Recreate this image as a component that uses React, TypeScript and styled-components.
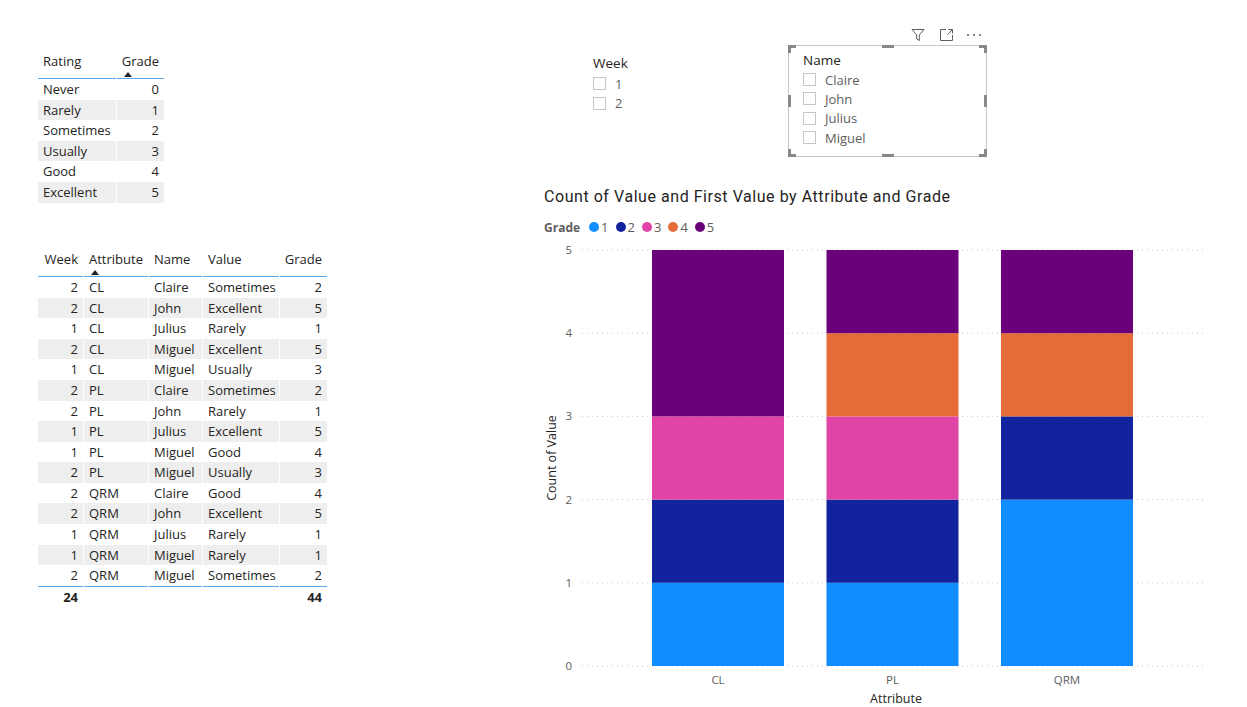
import React from 'react'
import styled, { createGlobalStyle } from 'styled-components'

const GlobalStyle = createGlobalStyle`
  html, body {
    margin: 0;
    padding: 0;
    background: #ffffff;
  }
  body {
    font-family: "Open Sans", "Noto Sans", sans-serif;
    color: #252423;
  }
`

const ratings = [
  ['Never', 0],
  ['Rarely', 1],
  ['Sometimes', 2],
  ['Usually', 3],
  ['Good', 4],
  ['Excellent', 5],
] as const

const rows: [number, string, string, string, number][] = [
  [2, 'CL', 'Claire', 'Sometimes', 2],
  [2, 'CL', 'John', 'Excellent', 5],
  [1, 'CL', 'Julius', 'Rarely', 1],
  [2, 'CL', 'Miguel', 'Excellent', 5],
  [1, 'CL', 'Miguel', 'Usually', 3],
  [2, 'PL', 'Claire', 'Sometimes', 2],
  [2, 'PL', 'John', 'Rarely', 1],
  [1, 'PL', 'Julius', 'Excellent', 5],
  [1, 'PL', 'Miguel', 'Good', 4],
  [2, 'PL', 'Miguel', 'Usually', 3],
  [2, 'QRM', 'Claire', 'Good', 4],
  [2, 'QRM', 'John', 'Excellent', 5],
  [1, 'QRM', 'Julius', 'Rarely', 1],
  [1, 'QRM', 'Miguel', 'Rarely', 1],
  [2, 'QRM', 'Miguel', 'Sometimes', 2],
]

const gradeColors: Record<number, string> = {
  1: '#118DFF',
  2: '#12239E',
  3: '#E044A7',
  4: '#E66C37',
  5: '#6B007B',
}

// stacks per category: [grade, count]
const stacks: { label: string; segs: [number, number][] }[] = [
  { label: 'CL', segs: [[1, 1], [2, 1], [3, 1], [5, 2]] },
  { label: 'PL', segs: [[1, 1], [2, 1], [3, 1], [4, 1], [5, 1]] },
  { label: 'QRM', segs: [[1, 2], [2, 1], [4, 1], [5, 1]] },
]

const App: React.FC = () => {
  return (
    <>
      <GlobalStyle />
      <Page>
        <LeftColumn>
          <Grid $cols="78px 47px">
            <HeadCell>
              <HeadLabel>Rating</HeadLabel>
            </HeadCell>
            <HeadCell $right>
              <HeadLabel>
                Grade
                <SortArrow />
              </HeadLabel>
            </HeadCell>
            {ratings.map(([name, grade], i) => (
              <React.Fragment key={name}>
                <Cell $shade={i % 2 === 1}>{name}</Cell>
                <Cell $shade={i % 2 === 1} $right>
                  {grade}
                </Cell>
              </React.Fragment>
            ))}
          </Grid>

          <MainTable $cols="45px 64px 53px 76px 47px">
            <HeadCell $right>
              <HeadLabel>Week</HeadLabel>
            </HeadCell>
            <HeadCell>
              <HeadLabel>
                Attribute
                <SortArrow />
              </HeadLabel>
            </HeadCell>
            <HeadCell>
              <HeadLabel>Name</HeadLabel>
            </HeadCell>
            <HeadCell>
              <HeadLabel>Value</HeadLabel>
            </HeadCell>
            <HeadCell $right>
              <HeadLabel>Grade</HeadLabel>
            </HeadCell>
            {rows.map((r, i) => (
              <React.Fragment key={i}>
                <Cell $shade={i % 2 === 1} $right>
                  {r[0]}
                </Cell>
                <Cell $shade={i % 2 === 1}>{r[1]}</Cell>
                <Cell $shade={i % 2 === 1}>{r[2]}</Cell>
                <Cell $shade={i % 2 === 1}>{r[3]}</Cell>
                <Cell $shade={i % 2 === 1} $right>
                  {r[4]}
                </Cell>
              </React.Fragment>
            ))}
            <TotalCell $right>24</TotalCell>
            <TotalCell />
            <TotalCell />
            <TotalCell />
            <TotalCell $right>44</TotalCell>
          </MainTable>
        </LeftColumn>

        <RightColumn>
          <SlicerRow>
            <WeekSlicer>
              <SlicerTitle>Week</SlicerTitle>
              <OptionList $offset={2}>
                {['1', '2'].map((w) => (
                  <Option key={w}>
                    <CheckBox />
                    {w}
                  </Option>
                ))}
              </OptionList>
            </WeekSlicer>

            <NameVisual>
              <IconBar>
                <IconButton>
                  <svg width="14" height="14" viewBox="0 0 14 14" fill="none">
                    <path d="M1 1.5 H13 L8.3 7 V12.5 L5.7 11 V7 Z" stroke="#605E5C" strokeWidth="1" strokeLinejoin="round" />
                  </svg>
                </IconButton>
                <IconButton>
                  <svg width="15" height="14" viewBox="0 0 15 14" fill="none">
                    <path d="M7 1.5 H1.5 V12.5 H13.5 V7" stroke="#605E5C" strokeWidth="1" />
                    <path d="M9.5 1.5 H13.5 V5.5 M13.5 1.5 L8.5 6.5" stroke="#605E5C" strokeWidth="1" />
                  </svg>
                </IconButton>
                <IconButton>
                  <svg width="16" height="4" viewBox="0 0 16 4" fill="#605E5C">
                    <circle cx="2" cy="2" r="1" />
                    <circle cx="8" cy="2" r="1" />
                    <circle cx="14" cy="2" r="1" />
                  </svg>
                </IconButton>
              </IconBar>
              <Frame>
                <Handle $pos="tl" />
                <Handle $pos="tr" />
                <Handle $pos="bl" />
                <Handle $pos="br" />
                <Handle $pos="t" />
                <Handle $pos="b" />
                <Handle $pos="l" />
                <Handle $pos="r" />
                <SlicerTitle>Name</SlicerTitle>
                <OptionList $offset={1}>
                  {['Claire', 'John', 'Julius', 'Miguel'].map((n) => (
                    <Option key={n} $tight>
                      <CheckBox />
                      {n}
                    </Option>
                  ))}
                </OptionList>
              </Frame>
            </NameVisual>
          </SlicerRow>

          <Chart>
            <ChartHeader>
              <ChartTitle>Count of Value and First Value by Attribute and Grade</ChartTitle>
              <Legend>
                <LegendTitle>Grade</LegendTitle>
                {[1, 2, 3, 4, 5].map((g) => (
                  <LegendItem key={g}>
                    <Dot $color={gradeColors[g]} />
                    {g}
                  </LegendItem>
                ))}
              </Legend>
            </ChartHeader>
            <ChartSvg width="712" height="467" viewBox="0 0 712 467">
              {[0, 1, 2, 3, 4, 5].map((v) => {
                const y = 426 - 83.2 * v
                return (
                  <g key={v}>
                    <line x1="47" x2="671" y1={y} y2={y} stroke="#c8c6c4" strokeWidth="1" strokeDasharray="1 4" />
                    <AxisText x="37" y={y + 4} textAnchor="end">
                      {v}
                    </AxisText>
                  </g>
                )
              })}
              {stacks.map((s, i) => {
                const x = 117 + i * 174.5
                let base = 0
                return (
                  <g key={s.label}>
                    {s.segs.map(([g, n]) => {
                      const top = 426 - 83.2 * (base + n)
                      const h = 83.2 * n
                      base += n
                      return <rect key={g} x={x} y={top} width="132" height={h} fill={gradeColors[g]} />
                    })}
                    <AxisText x={x + 66} y="444" textAnchor="middle">
                      {s.label}
                    </AxisText>
                  </g>
                )
              })}
              <AxisTitle x="16" y="218" textAnchor="middle" dominantBaseline="central" transform="rotate(-90 16 218)">
                Count of Value
              </AxisTitle>
              <AxisTitle x="361" y="463" textAnchor="middle">
                Attribute
              </AxisTitle>
            </ChartSvg>
          </Chart>
        </RightColumn>
      </Page>
    </>
  )
}

const Page = styled.div`
  display: flex;
  width: 1247px;
  height: 707px;
  overflow: hidden;
`

const LeftColumn = styled.div`
  width: 535px;
  box-sizing: border-box;
  padding: 51px 0 0 38px;
  display: flex;
  flex-direction: column;
  align-items: flex-start;
`

const Grid = styled.div<{ $cols: string }>`
  display: grid;
  grid-template-columns: ${(p) => p.$cols};
  column-gap: 1px;
  font-size: 13px;
  color: #252423;
`

const MainTable = styled(Grid)`
  margin-top: 46.4px;
`

const HeadCell = styled.div<{ $right?: boolean }>`
  height: 28px;
  box-sizing: border-box;
  padding: 1px 5px 0;
  line-height: 18px;
  border-bottom: 1px solid #5aa7ec;
  display: flex;
  justify-content: ${(p) => (p.$right ? 'flex-end' : 'flex-start')};
  white-space: nowrap;
`

const HeadLabel = styled.span`
  display: inline-flex;
  flex-direction: column;
  align-items: flex-start;
`

const SortArrow = styled.span`
  width: 0;
  height: 0;
  margin: 2px 0 0 2px;
  border-left: 4px solid transparent;
  border-right: 4px solid transparent;
  border-bottom: 5px solid #252423;
`

const Cell = styled.div<{ $right?: boolean; $shade?: boolean }>`
  height: 20.6px;
  line-height: 20.6px;
  padding: 0 5px;
  white-space: nowrap;
  text-align: ${(p) => (p.$right ? 'right' : 'left')};
  background: ${(p) => (p.$shade ? '#eeeeee' : 'transparent')};
`

const TotalCell = styled(Cell)`
  height: 21px;
  line-height: 21px;
  border-top: 1px solid #5aa7ec;
  font-weight: 700;
`

const RightColumn = styled.div`
  flex: 1;
  padding-top: 24px;
  display: flex;
  flex-direction: column;
`

const SlicerRow = styled.div`
  display: flex;
  align-items: flex-start;
  padding-left: 58px;
`

const WeekSlicer = styled.div`
  width: 195px;
  margin-top: 30px;
`

const SlicerTitle = styled.div`
  font-size: 13.5px;
  line-height: 18px;
  color: #252423;
`

const OptionList = styled.div<{ $offset: number }>`
  margin-top: ${(p) => p.$offset}px;
  display: flex;
  flex-direction: column;
`

const Option = styled.div<{ $tight?: boolean }>`
  display: flex;
  align-items: center;
  gap: 9px;
  height: ${(p) => (p.$tight ? '19.3px' : '19.5px')};
  font-size: 13px;
  color: #605e5c;
`

const CheckBox = styled.span`
  width: 13px;
  height: 13px;
  box-sizing: border-box;
  border: 1px solid #c8c6c4;
  background: #ffffff;
  flex-shrink: 0;
`

const NameVisual = styled.div`
  width: 199px;
  display: flex;
  flex-direction: column;
`

const IconBar = styled.div`
  height: 21px;
  display: flex;
  justify-content: flex-end;
  align-items: center;
  gap: 8px;
  padding-right: 3px;
`

const IconButton = styled.span`
  width: 20px;
  height: 20px;
  display: flex;
  align-items: center;
  justify-content: center;
`

const Frame = styled.div`
  position: relative;
  height: 112px;
  box-sizing: border-box;
  border: 1px solid #c8c6c4;
  padding: 5px 0 0 14px;
`

const handleStyles: Record<string, string> = {
  tl: 'left: -1px; top: -1px; width: 8px; height: 8px; border-left: 3px solid #8a8886; border-top: 3px solid #8a8886;',
  tr: 'right: -1px; top: -1px; width: 8px; height: 8px; border-right: 3px solid #8a8886; border-top: 3px solid #8a8886;',
  bl: 'left: -1px; bottom: -1px; width: 8px; height: 8px; border-left: 3px solid #8a8886; border-bottom: 3px solid #8a8886;',
  br: 'right: -1px; bottom: -1px; width: 8px; height: 8px; border-right: 3px solid #8a8886; border-bottom: 3px solid #8a8886;',
  t: 'left: 50%; top: -1px; width: 12px; height: 3px; margin-left: -6px; background: #8a8886;',
  b: 'left: 50%; bottom: -1px; width: 12px; height: 3px; margin-left: -6px; background: #8a8886;',
  l: 'left: -1px; top: 50%; width: 3px; height: 12px; margin-top: -6px; background: #8a8886;',
  r: 'right: -1px; top: 50%; width: 3px; height: 12px; margin-top: -6px; background: #8a8886;',
}

const Handle = styled.span<{ $pos: string }>`
  position: absolute;
  box-sizing: border-box;
  ${(p) => handleStyles[p.$pos]}
`

const Chart = styled.div`
  margin-top: 30px;
  display: flex;
  flex-direction: column;
`

const ChartHeader = styled.div`
  padding-left: 9px;
`

const ChartTitle = styled.div`
  font-family: Roboto, "Noto Sans", sans-serif;
  font-size: 16px;
  line-height: 20px;
  color: #252423;
  letter-spacing: 0.55px;
`

const Legend = styled.div`
  margin-top: 11px;
  height: 18px;
  display: flex;
  align-items: center;
  gap: 7px;
  font-size: 13px;
  color: #605e5c;
`

const LegendTitle = styled.span`
  font-size: 12px;
  font-weight: 700;
  color: #605e5c;
  margin-right: 2px;
`

const LegendItem = styled.span`
  display: flex;
  align-items: center;
  gap: 2px;
`

const Dot = styled.span<{ $color: string }>`
  width: 10px;
  height: 10px;
  border-radius: 50%;
  background: ${(p) => p.$color};
`

const ChartSvg = styled.svg`
  display: block;
  margin-top: 4px;
`

const AxisText = styled.text`
  font-family: "Open Sans", "Noto Sans", sans-serif;
  font-size: 11.5px;
  fill: #605e5c;
`

const AxisTitle = styled.text`
  font-family: "Open Sans", "Noto Sans", sans-serif;
  font-size: 12.5px;
  fill: #252423;
`

export default App
